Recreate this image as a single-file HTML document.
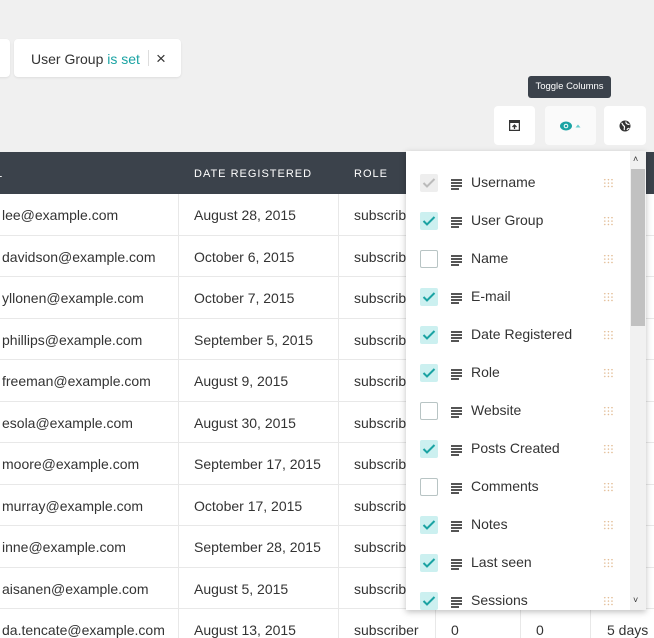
<!DOCTYPE html>
<html><head><meta charset="utf-8"><style>
*{box-sizing:border-box;margin:0;padding:0}
html,body{width:654px;height:638px;overflow:hidden}
body{background:#f0f0f0;font-family:"Liberation Sans",sans-serif;position:relative;color:#333}
.chip{position:absolute;background:#fff;border-radius:4px;box-shadow:0 1px 2px rgba(0,0,0,.08)}
.btn{position:absolute;background:#fff;border-radius:4px;top:106px;height:39px;display:flex;align-items:center;justify-content:center}
.hdr{position:absolute;left:0;top:152px;width:654px;height:42px;background:#3b424b;color:#fff;font-size:11px;letter-spacing:1px}
.hdr span{position:absolute;top:16px}
.row{position:absolute;left:0;width:654px;height:41.5px;background:#fff;border-bottom:1px solid #e8e8e8;font-size:14px;color:#333}
.row span{position:absolute;top:13px;white-space:nowrap}
.vl{position:absolute;top:194px;height:444px;width:1px;background:#e8e8e8}
.dd{position:absolute;left:406px;top:151px;width:240px;height:459px;background:#fff;box-shadow:0 2px 6px rgba(0,0,0,.25);overflow:hidden}
.it{position:absolute;left:0;width:224px;height:38px}
.cb{position:absolute;left:14px;top:0;width:18px;height:18px;border-radius:2px;background:#ccf0f0}
.cb.off{background:#fff;border:1px solid #b8c4c4}
.cb.dis{background:#eee}
.cb svg{position:absolute;left:2px;top:3px}
.li{position:absolute;left:45px;top:5px;width:11px}
.li i{display:block;height:1.5px;background:#555;margin-bottom:1.5px}
.it b{position:absolute;left:65px;top:0px;font-weight:normal;font-size:14px;color:#333}
.dots{position:absolute;left:197px;top:4px;width:11px;height:10px;background-image:radial-gradient(#e0b88e 0.7px,transparent 0.8px);background-size:3.6px 3.4px}
</style></head><body>
<div class="chip" style="left:-5px;top:39px;width:15px;height:38px"></div>
<div class="chip" style="left:14px;top:39px;width:167px;height:38px;font-size:14px">
<span style="position:absolute;left:17px;top:12px">User Group <span style="color:#1aa3a3">is set</span></span>
<span style="position:absolute;left:134px;top:11px;width:1px;height:16px;background:#ddd"></span>
<span style="position:absolute;left:142px;top:10px;font-size:17px">×</span>
</div>
<div style="position:absolute;left:528px;top:76px;width:83px;height:22px;background:#3b424b;border-radius:3px;color:#fff;font-size:9.5px;text-align:center;line-height:22px">Toggle Columns</div>
<div class="btn" style="left:494px;width:41px"><svg width="11" height="11" viewBox="0 0 11 11"><rect x="0.5" y="0.5" width="10" height="10" fill="none" stroke="#333" stroke-width="1.5"/><rect x="0" y="0" width="11" height="3" fill="#333"/><path d="M5.5 9V5M3.5 7L5.5 5L7.5 7" stroke="#333" stroke-width="1.3" fill="none"/></svg></div>
<div class="btn" style="left:545px;width:51px;background:#fafafa"><svg width="22" height="10" viewBox="0 0 22 10"><ellipse cx="6" cy="5" rx="6" ry="4.5" fill="#1aa3a3"/><circle cx="6" cy="5" r="2.3" fill="#fff"/><circle cx="6" cy="5" r="1.3" fill="#1aa3a3"/><path d="M15.5 6.5L18 3.5L20.5 6.5Z" fill="#6cc"/></svg></div>
<div class="btn" style="left:604px;width:42px"><svg width="12" height="12" viewBox="0 0 12 12"><circle cx="6" cy="6" r="5.5" fill="#333"/><path d="M2.5 3C4 3.5 3.5 5.5 5 6S4.5 8.5 5.5 10M7 1.5C6.5 3.5 8.5 4.5 10.5 4.5M8 10C8.5 8.5 9.5 8 10.5 8.5" stroke="#fff" stroke-width="1.2" fill="none"/></svg></div>
<div class="hdr"><span style="left:-4px">L</span><span style="left:194px">DATE REGISTERED</span><span style="left:354px">ROLE</span></div>
<div class="row" style="top:194px"><span style="left:2px">lee@example.com</span><span style="left:194px">August 28, 2015</span><span style="left:354px">subscrib</span></div>
<div class="row" style="top:235.5px"><span style="left:2px">davidson@example.com</span><span style="left:194px">October 6, 2015</span><span style="left:354px">subscrib</span></div>
<div class="row" style="top:277px"><span style="left:2px">yllonen@example.com</span><span style="left:194px">October 7, 2015</span><span style="left:354px">subscrib</span></div>
<div class="row" style="top:318.5px"><span style="left:2px">phillips@example.com</span><span style="left:194px">September 5, 2015</span><span style="left:354px">subscrib</span></div>
<div class="row" style="top:360px"><span style="left:2px">freeman@example.com</span><span style="left:194px">August 9, 2015</span><span style="left:354px">subscrib</span></div>
<div class="row" style="top:401.5px"><span style="left:2px">esola@example.com</span><span style="left:194px">August 30, 2015</span><span style="left:354px">subscrib</span></div>
<div class="row" style="top:443px"><span style="left:2px">moore@example.com</span><span style="left:194px">September 17, 2015</span><span style="left:354px">subscrib</span></div>
<div class="row" style="top:484.5px"><span style="left:2px">murray@example.com</span><span style="left:194px">October 17, 2015</span><span style="left:354px">subscrib</span></div>
<div class="row" style="top:526px"><span style="left:2px">inne@example.com</span><span style="left:194px">September 28, 2015</span><span style="left:354px">subscrib</span></div>
<div class="row" style="top:567.5px"><span style="left:2px">aisanen@example.com</span><span style="left:194px">August 5, 2015</span><span style="left:354px">subscrib</span></div>
<div class="row" style="top:609px"><span style="left:2px">da.tencate@example.com</span><span style="left:194px">August 13, 2015</span><span style="left:354px">subscriber</span><span style="left:451px">0</span><span style="left:536px">0</span><span style="left:607px">5 days</span></div>
<div class="vl" style="left:178px"></div><div class="vl" style="left:338px"></div><div class="vl" style="left:435px"></div><div class="vl" style="left:520px"></div><div class="vl" style="left:590px"></div>
<div class="dd">
<div style="position:absolute;left:224px;top:0;width:16px;height:459px;background:#f1f1f1"></div>
<div style="position:absolute;left:225px;top:18px;width:14px;height:157px;background:#c1c1c1"></div>
<div style="position:absolute;left:227px;top:3px;font-size:9px;color:#333">&#x2C4;</div>
<div style="position:absolute;left:227px;top:444px;font-size:9px;color:#333">&#x2C5;</div>
<div id="list"></div>
</div>
<script>
var items=[["Username","dis"],["User Group","on"],["Name","off"],["E-mail","on"],["Date Registered","on"],["Role","on"],["Website","off"],["Posts Created","on"],["Comments","off"],["Notes","on"],["Last seen","on"],["Sessions","on"]];
var h="";items.forEach(function(t,i){var top=23+i*38;var chk=t[1]=="off"?"":'<svg width="14" height="12" viewBox="0 0 14 12"><path d="M1.5 6L5 9.5L12.5 2" stroke="'+(t[1]=="dis"?"#bbb":"#1aa3a3")+'" stroke-width="2" fill="none"/></svg>';
h+='<div class="it" style="top:'+top+'px"><div class="cb '+t[1]+'">'+chk+'</div><div class="li"><i></i><i></i><i></i><i style="width:8px"></i></div><b>'+t[0]+'</b><div class="dots"></div></div>';});
document.getElementById("list").innerHTML=h;
</script>
</body></html>
